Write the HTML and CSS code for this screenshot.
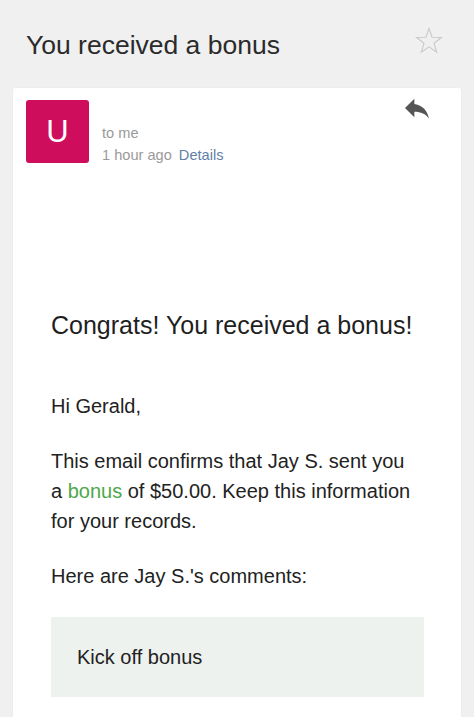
FILE: index.html
```html
<!DOCTYPE html>
<html lang="en">
<head>
<meta charset="utf-8">
<title>You received a bonus</title>
<link rel="stylesheet" href="styles.css">
</head>
<body>
<div class="page">
  <header class="topbar">
    <h1 class="subject">You received a bonus</h1>
    <svg class="star" width="28" height="28" viewBox="0 0 28 28" aria-hidden="true">
      <polygon points="14,1.5 17.1,10.3 26.4,10.5 19,16.2 21.7,25.2 14,19.8 6.3,25.2 9,16.2 1.6,10.5 10.9,10.3" fill="none" stroke="#c9c9c9" stroke-width="1.1" stroke-linejoin="miter"/>
    </svg>
  </header>
  <main class="card">
    <div class="sender">
      <div class="avatar">U</div>
      <div class="meta">
        <div class="to">to me</div>
        <div class="when">1 hour ago <span class="details">Details</span></div>
      </div>
      <svg class="reply" width="32" height="32" viewBox="0 0 24 24" aria-hidden="true">
        <path d="M10 9V5l-7 7 7 7v-4.1c5 0 8.5 1.6 11 5.1-1-5-4-10-11-11z" fill="#555"/>
      </svg>
    </div>
    <div class="message">
      <h2 class="headline">Congrats! You received a bonus!</h2>
      <p class="para">Hi Gerald,</p>
      <p class="para">This email confirms that Jay S. sent you a <span class="link">bonus</span> of $50.00. Keep this information for your records.</p>
      <p class="para">Here are Jay S.'s comments:</p>
      <div class="comment">Kick off bonus</div>
    </div>
  </main>
</div>
</body>
</html>
```
FILE: styles.css
```css
html, body {
  margin: 0;
  padding: 0;
  background: #f0f0f0;
  height: 100%;
  overflow: hidden;
}
body {
  font-family: "Liberation Sans", Arial, Helvetica, sans-serif;
  color: #222;
}
.page {
  display: flex;
  flex-direction: column;
  min-height: 717px;
}
.topbar {
  display: flex;
  align-items: flex-start;
  justify-content: space-between;
  padding: 29px 31px 27px 26px;
}
.subject {
  margin: 0;
  font-size: 26.5px;
  line-height: 32px;
  font-weight: normal;
  color: #2b2b2b;
}
.star {
  margin-top: -2px;
}
.card {
  flex: 1;
  margin: 0 13px;
  background: #fff;
  border-radius: 2px 2px 0 0;
  box-shadow: 0 0 2px rgba(0, 0, 0, 0.06);
  padding: 12px 13px 0 13px;
}
.sender {
  display: flex;
  align-items: flex-start;
}
.avatar {
  width: 63px;
  height: 63px;
  border-radius: 3px;
  background: #cf0d5d;
  color: #fff;
  font-size: 31px;
  line-height: 63px;
  text-align: center;
  font-weight: normal;
}
.meta {
  margin-top: 22px;
  margin-left: 13px;
  font-size: 14.6px;
  line-height: 22px;
  color: #9a9a9a;
}
.details {
  margin-left: 3px;
  color: #5f7fa6;
}
.reply {
  margin: -8px 15px 0 auto;
}
.message {
  margin-top: 144px;
  padding: 0 24px 0 25px;
}
.headline {
  margin: 0 0 51px;
  font-size: 25px;
  line-height: 30px;
  font-weight: normal;
  color: #1f1f1f;
}
.para {
  margin: 0 0 25px;
  max-width: 364px;
  font-size: 20px;
  line-height: 30px;
}
.link {
  color: #4da84a;
}
.comment {
  margin-top: 26px;
  background: #eef2ef;
  padding: 25px 26px;
  font-size: 20px;
  line-height: 30px;
}
```
